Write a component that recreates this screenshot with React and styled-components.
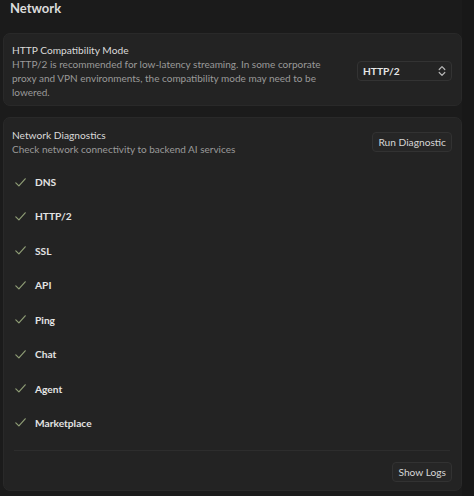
import React from "react";
import styled, { createGlobalStyle } from "styled-components";

const Global = createGlobalStyle`
  html, body { margin: 0; padding: 0; background: #1b1b1b; }
  body { font-family: Lato, "Noto Sans", sans-serif; }
  * { box-sizing: border-box; }
`;

const Page = styled.div`
  width: 474px;
  height: 496px;
  display: flex;
  background: #1b1b1b;
  overflow: hidden;
`;

const Main = styled.div`
  flex: 1;
  padding: 0 0 0 3px;
  display: flex;
  flex-direction: column;
  & > * { flex-shrink: 0; }
`;

const Gutter = styled.div`
  width: 12px;
  background: #181818;
`;

const Heading = styled.h2`
  margin: 0;
  padding: 0 0 0 7px;
  height: 33px;
  line-height: 16px;
  font-size: 13px;
  font-weight: 700;
  color: #dcdcdc;
`;

const Card = styled.section`
  background: #232323;
  border: 1px solid #292929;
  border-radius: 7px;
  padding: ${(p) => p.$pad};
  margin-bottom: ${(p) => p.$mb || "0"};
  display: flex;
  flex-direction: column;
`;

const Row = styled.div`
  display: flex;
  align-items: ${(p) => p.$align || "center"};
  justify-content: space-between;
  gap: 16px;
`;

const TextCol = styled.div`
  display: flex;
  flex-direction: column;
  min-width: 0;
`;

const Title = styled.div`
  font-size: 10.2px;
  line-height: 14px;
  color: #dadada;
`;

const Desc = styled.div`
  font-size: 10px;
  line-height: 14px;
  color: #9a9a9a;
  max-width: ${(p) => p.$max || "none"};
`;

const Select = styled.div`
  width: 95px;
  height: 20px;
  border: 1px solid #333;
  border-radius: 4px;
  background: #242424;
  display: flex;
  align-items: center;
  justify-content: space-between;
  padding: 0 5px 0 5px;
  font-size: 10.2px;
  font-weight: 700;
  color: #e6e6e6;
  flex-shrink: 0;
`;

const Button = styled.button`
  height: 20px;
  padding: 0 5px;
  margin-top: ${(p) => p.$mt || "0"};
  border: 1px solid #323232;
  border-radius: 4px;
  background: #262626;
  color: #d6d6d6;
  font-family: inherit;
  font-size: 10.2px;
  line-height: 18px;
  flex-shrink: 0;
  cursor: pointer;
`;

const Checks = styled.ul`
  list-style: none;
  margin: 18px 0 0 0;
  padding: 0 0 0 3px;
  display: flex;
  flex-direction: column;
  gap: 18.43px;
`;

const CheckItem = styled.li`
  display: flex;
  align-items: center;
  gap: 9px;
  height: 16px;
  font-size: 10.2px;
  font-weight: 700;
  color: #e4e4e4;
`;

const Divider = styled.hr`
  border: 0;
  border-top: 1px solid #2d2d2d;
  margin: 19px 2px 11px 2px;
  padding: 0;
`;

const Footer = styled.div`
  display: flex;
  justify-content: flex-end;
`;

const Check = () => (
  <svg width="11" height="9" viewBox="0 0 11 9" fill="none">
    <path d="M0.8 4.8 L3.9 7.9 L10.2 0.8" stroke="#8e9c75" strokeWidth="1.2" strokeLinecap="round" strokeLinejoin="round" />
  </svg>
);

const UpDown = () => (
  <svg width="8" height="12" viewBox="0 0 8 12" fill="none">
    <path d="M1.2 4.5 L4 1.7 L6.8 4.5 M1.2 7.5 L4 10.3 L6.8 7.5" stroke="#b8b8b8" strokeWidth="1.2" strokeLinecap="round" strokeLinejoin="round" />
  </svg>
);

const items = ["DNS", "HTTP/2", "SSL", "API", "Ping", "Chat", "Agent", "Marketplace"];

export default function App() {
  return (
    <>
      <Global />
      <Page>
        <Main>
          <Heading>Network</Heading>
          <Card $pad="9px 9px 6px 8px" $mb="11px">
            <Row>
              <TextCol>
                <Title>HTTP Compatibility Mode</Title>
                <Desc $max="318px">
                  HTTP/2 is recommended for low-latency streaming. In some corporate proxy and VPN environments, the compatibility mode may need to be lowered.
                </Desc>
              </TextCol>
              <Select>
                <span>HTTP/2</span>
                <UpDown />
              </Select>
            </Row>
          </Card>
          <Card $pad="10px 9px 8px 8px">
            <Row $align="flex-start">
              <TextCol>
                <Title>Network Diagnostics</Title>
                <Desc>Check network connectivity to backend AI services</Desc>
              </TextCol>
              <Button $mt="4px">Run Diagnostic</Button>
            </Row>
            <Checks>
              {items.map((it) => (
                <CheckItem key={it}>
                  <Check />
                  <span>{it}</span>
                </CheckItem>
              ))}
            </Checks>
            <Divider />
            <Footer>
              <Button>Show Logs</Button>
            </Footer>
          </Card>
        </Main>
        <Gutter />
      </Page>
    </>
  );
}
